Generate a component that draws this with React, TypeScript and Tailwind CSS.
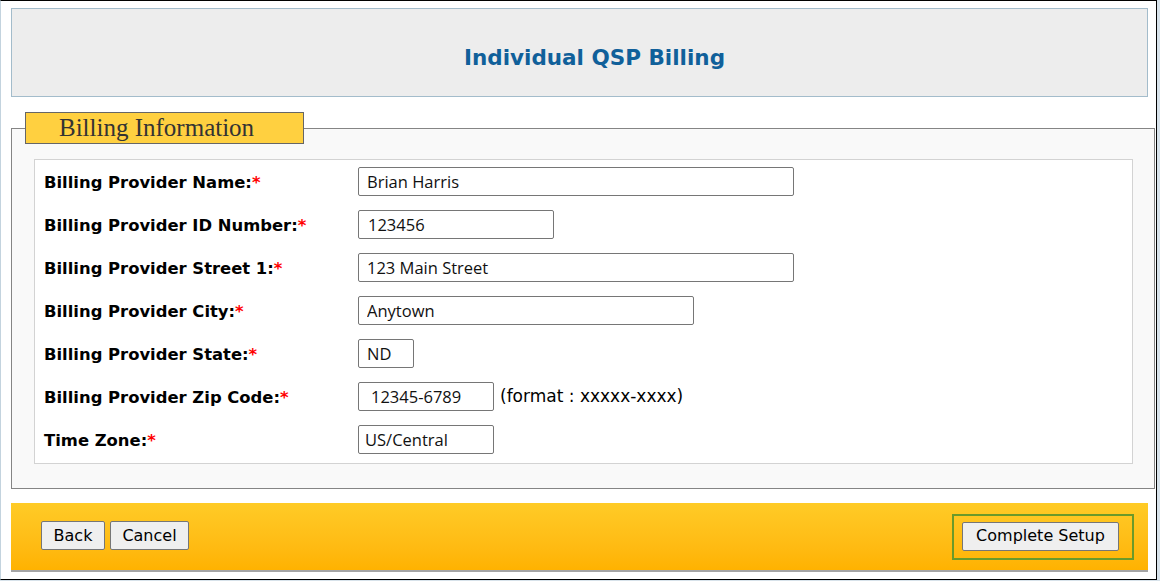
const rows = [
  { label: 'Billing Provider Name:', value: 'Brian Harris', width: 'w-[436px]', pad: 'pl-[8px]' },
  { label: 'Billing Provider ID Number:', value: '123456', width: 'w-[196px]', pad: 'pl-[9px]' },
  { label: 'Billing Provider Street 1:', value: '123 Main Street', width: 'w-[436px]', pad: 'pl-[8px]' },
  { label: 'Billing Provider City:', value: 'Anytown', width: 'w-[336px]', pad: 'pl-[8px]' },
  { label: 'Billing Provider State:', value: 'ND', width: 'w-[56px]', pad: 'pl-[8px]' },
  { label: 'Billing Provider Zip Code:', value: '12345-6789', width: 'w-[136px]', pad: 'pl-[12px]', hint: '(format : xxxxx-xxxx)' },
  { label: 'Time Zone:', value: 'US/Central', width: 'w-[136px]', pad: 'pl-[6px]' },
];

function Field({ label, value, width, pad, hint }: (typeof rows)[number]) {
  return (
    <div className="flex h-[43px] items-center">
      <div className="w-[314px] shrink-0 pt-[3px] text-[16.4px] font-bold text-black [font-family:'DejaVu_Sans',sans-serif]">
        {label}
        <span className="text-[#ff0000]">*</span>
      </div>
      <input
        readOnly
        value={value}
        className={`${width} ${pad} h-[29px] rounded-[2px] border border-[#767676] bg-white text-[16.5px] text-[#111] outline-none [font-family:'Open_Sans',sans-serif]`}
      />
      {hint && (
        <span className="ml-[6px] text-[17px] text-black [font-family:'DejaVu_Sans',sans-serif]">{hint}</span>
      )}
    </div>
  );
}

export default function App() {
  return (
    <div className="h-[581px] w-[1160px] bg-[#d7e2ea]">
      <div className="h-[580px] w-[1157px] border-b border-l border-r border-t border-black border-l-[#c3d3de] bg-white">
        {/* Header */}
        <div className="ml-[10px] mt-[7px] flex h-[89px] w-[1137px] items-center justify-center border border-[#a3bccb] bg-[#ededed] pl-[30px] pt-[12px]">
          <h1 className="text-[21.5px] font-bold text-[#10609a] [font-family:'DejaVu_Sans',sans-serif]">
            Individual QSP Billing
          </h1>
        </div>

        {/* Billing Information */}
        <fieldset className="ml-[10px] mt-[15px] w-[1144px] border border-[#858585] bg-[#f9f9f9]">
          <legend className="ml-[13px] h-[32px] w-[279px] border border-[#666] bg-[#ffd040] pl-[33px] text-[25px] leading-[29px] text-[#333] [font-family:'Liberation_Serif',serif]">
            Billing Information
          </legend>
          <div className="mb-[24px] ml-[22px] mr-[21px] mt-[15px] border border-[#d3d3d3] bg-white pb-[2px] pl-[9px]">
            {rows.map((r) => (
              <Field key={r.label} {...r} />
            ))}
          </div>
        </fieldset>

        {/* Footer */}
        <div className="ml-[10px] mt-[14px] flex h-[69px] w-[1137px] items-center justify-between border-b-2 border-[#a5a5a5] bg-gradient-to-b from-[#ffcb26] to-[#ffb200] pl-[30px] pr-[14px]">
          <div className="flex gap-[5px] pb-[2px]">
            <button className="h-[29px] w-[64px] rounded-[2px] border border-[#767676] bg-[#efefef] text-[16px] text-black [font-family:'DejaVu_Sans',sans-serif]">
              Back
            </button>
            <button className="h-[29px] w-[79px] rounded-[2px] border border-[#767676] bg-[#efefef] text-[16px] text-black [font-family:'DejaVu_Sans',sans-serif]">
              Cancel
            </button>
          </div>
          <div className="flex h-[46px] w-[182px] items-start border-2 border-[#6b9a2a] pl-[8px] pt-[6px]">
            <button className="h-[29px] w-[157px] rounded-[2px] border border-[#767676] bg-[#efefef] text-[16px] text-black [font-family:'DejaVu_Sans',sans-serif]">
              Complete Setup
            </button>
          </div>
        </div>
      </div>
    </div>
  );
}
